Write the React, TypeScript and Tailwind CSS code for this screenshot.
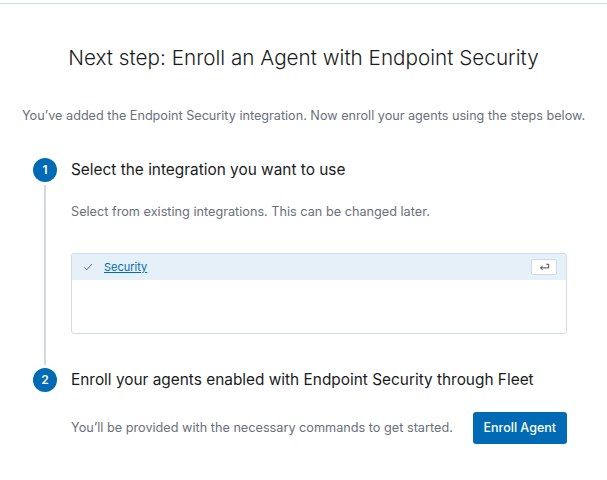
import React from 'react';

const font = { fontFamily: 'Inter, "Noto Sans", sans-serif' };

const StepNumber: React.FC<{ n: number }> = ({ n }) => (
  <div className="w-6 h-6 rounded-full bg-[#006bb4] text-white text-[12px] font-semibold flex items-center justify-center shrink-0">
    {n}
  </div>
);

export default function App() {
  return (
    <div className="w-[607px] h-[480px] bg-white overflow-hidden" style={font}>
      <div className="mt-[3px] border-t border-[#d3dae6]" />

      <h1 className="mt-[40px] text-center text-[20.7px] leading-[28px] font-light text-[#1a1c21]">
        Next step: Enroll an Agent with Endpoint Security
      </h1>

      <p className="mt-[36px] text-center text-[12.65px] leading-4 text-[#69707d]">
        You’ve added the Endpoint Security integration. Now enroll your agents using the steps below.
      </p>

      <div className="mt-[34px] pl-[33px] pr-[40px]">
        {/* step 1 */}
        <div className="flex gap-[14px]">
          <div className="flex flex-col items-center w-6">
            <StepNumber n={1} />
            <div className="flex-1 w-[2px] bg-[#d3dae6] mt-[3px] mb-[3px]" />
          </div>
          <div className="flex-1 pb-[34px]">
            <h2 className="text-[15.4px] leading-6 text-[#1a1c21]">Select the integration you want to use</h2>
            <p className="mt-[22px] text-[12.7px] leading-4 text-[#69707d]">
              Select from existing integrations. This can be changed later.
            </p>
            <div className="mt-[33px] h-[81px] border border-[#d3dae6] rounded-[3px] overflow-hidden">
              <div className="h-[26px] bg-[#e6f0f8] flex items-center pl-[11px] pr-[9px]">
                <svg width="10" height="10" viewBox="0 0 16 16" className="text-[#535966]">
                  <path d="M2 8.5l4 4 8-9" fill="none" stroke="currentColor" strokeWidth="1.5" />
                </svg>
                <span className="ml-[11px] text-[11px] leading-4 text-[#006bb4] underline">Security</span>
                <div className="ml-auto w-[26px] h-[16px] bg-white border border-[#d3dae6] rounded-[2px] flex items-center justify-center">
                  <svg width="11" height="8" viewBox="0 0 12 8" className="text-[#343741]">
                    <path d="M8 1h2.5v4H2M4 3L1.5 5 4 7" fill="none" stroke="currentColor" strokeWidth="1" />
                  </svg>
                </div>
              </div>
            </div>
          </div>
        </div>

        {/* step 2 */}
        <div className="flex gap-[14px]">
          <div className="w-6">
            <StepNumber n={2} />
          </div>
          <div className="flex-1">
            <h2 className="text-[15.4px] leading-6 text-[#1a1c21]">
              Enroll your agents enabled with Endpoint Security through Fleet
            </h2>
            <div className="mt-[20px] flex items-center justify-between">
              <p className="text-[12.7px] leading-4 text-[#69707d]">
                You’ll be provided with the necessary commands to get started.
              </p>
              <button className="h-[32px] px-[11px] rounded-[3px] bg-[#006bb4] text-white text-[12.5px] font-medium">
                Enroll Agent
              </button>
            </div>
          </div>
        </div>
      </div>
    </div>
  );
}
